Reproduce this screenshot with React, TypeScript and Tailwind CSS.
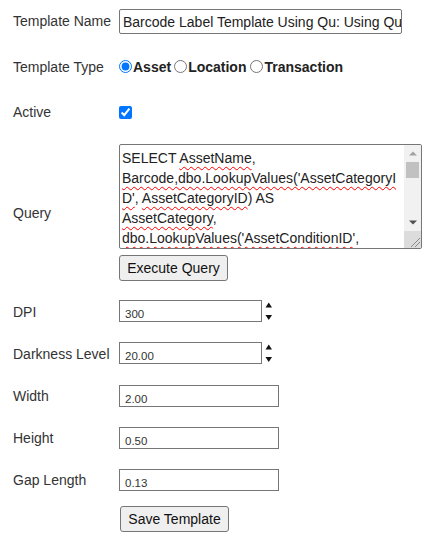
import React from "react";

const sq = "underline decoration-wavy decoration-[#ff0000] decoration-1 underline-offset-[3px]";

function Spinner() {
  return (
    <svg width="8" height="22" viewBox="0 0 8 22" className="ml-[3px] shrink-0">
      <polygon points="0.5,7.5 3.75,2.5 7,7.5" fill="#111" />
      <polygon points="0.5,15 7,15 3.75,20" fill="#111" />
    </svg>
  );
}

function Field({ value, width }: { value: string; width: string }) {
  return (
    <div
      className={`${width} h-[22px] border border-[#767676] bg-white pl-[5px] pt-[7px] text-[11.5px] leading-[13px] text-[#333] overflow-hidden whitespace-nowrap`}
    >
      {value}
    </div>
  );
}

function Label({ children, extra = "" }: { children: React.ReactNode; extra?: string }) {
  return (
    <div className={`w-[106px] shrink-0 text-[14px] leading-[20px] text-[#333] ${extra}`}>{children}</div>
  );
}

export default function App() {
  return (
    <div className="w-[435px] h-[544px] bg-white pl-[13px] font-['Liberation_Sans',Arial,sans-serif] text-[#333] flex flex-col">
      {/* Template Name */}
      <div className="mt-[9px] h-[25px] flex items-center">
        <Label extra="-mt-[2px]">Template Name</Label>
        <div className="w-[283px] h-[25px] border border-[#767676] rounded-[2px] pl-[3px] flex items-center text-[14px] leading-[20px] text-[#222] overflow-hidden whitespace-nowrap">
          Barcode Label Template Using Qu: Using Qu
        </div>
      </div>

      {/* Template Type */}
      <div className="mt-[23px] h-[20px] flex items-center">
        <Label>Template Type</Label>
        <div className="flex items-center text-[14px] leading-[20px] font-bold text-[#222]">
          <input type="radio" name="tt" defaultChecked className="m-0 w-[13px] h-[13px] -mt-[2px]" />
          <span className="ml-[1px]">Asset</span>
          <input type="radio" name="tt" className="m-0 ml-[3px] w-[13px] h-[13px] -mt-[2px]" />
          <span className="ml-[1px]">Location</span>
          <input type="radio" name="tt" className="m-0 ml-[4px] w-[13px] h-[13px] -mt-[2px]" />
          <span className="ml-[1px]">Transaction</span>
        </div>
      </div>

      {/* Active */}
      <div className="mt-[25px] h-[20px] flex items-center">
        <Label>Active</Label>
        <input type="checkbox" defaultChecked className="m-0 w-[13px] h-[13px]" />
      </div>

      {/* Query */}
      <div className="mt-[22px] flex items-center">
        <Label>Query</Label>
        <div className="flex flex-col">
          <div className="w-[303px] h-[105px] border border-[#767676] rounded-[2px] flex overflow-hidden bg-white">
            <div className="flex-1 pl-[2px] pt-[3px] text-[14px] leading-[20px] text-[#222] whitespace-nowrap overflow-hidden">
              <div>
                SELECT <span className={sq}>AssetName</span>,
              </div>
              <div>
                <span className={sq}>Barcode,dbo.LookupValues('AssetCategoryI</span>
              </div>
              <div>
                <span className={sq}>D'</span>, <span className={sq}>AssetCategoryID</span>) AS
              </div>
              <div>
                <span className={sq}>AssetCategory</span>,
              </div>
              <div>
                <span className={sq}>dbo.LookupValues('AssetConditionID'</span>,
              </div>
            </div>
            <div className="w-[17px] shrink-0 flex flex-col bg-[#f1f1f1]">
              <div className="h-[17px] flex items-center justify-center">
                <svg width="8" height="5" viewBox="0 0 8 5">
                  <polygon points="0,4.5 4,0.5 8,4.5" fill="#a3a3a3" />
                </svg>
              </div>
              <div className="h-[16px] mx-[2px] bg-[#c1c1c1]" />
              <div className="flex-1" />
              <div className="h-[17px] flex items-center justify-center">
                <svg width="8" height="5" viewBox="0 0 8 5">
                  <polygon points="0,0.5 8,0.5 4,4.5" fill="#505050" />
                </svg>
              </div>
              <div className="h-[17px] bg-[#dcdcdc] flex items-end justify-end">
                <svg width="17" height="17" viewBox="0 0 17 17">
                  <line x1="7" y1="16" x2="16" y2="7" stroke="#8a8a8a" strokeWidth="1" />
                  <line x1="11" y1="16" x2="16" y2="11" stroke="#8a8a8a" strokeWidth="1" />
                </svg>
              </div>
            </div>
          </div>
          <button className="mt-[6px] w-[109px] h-[26px] border border-[#767676] rounded-[3px] bg-[#efefef] text-[14px] leading-[20px] text-[#111] flex items-center justify-center">
            Execute Query
          </button>
        </div>
      </div>

      {/* DPI */}
      <div className="mt-[19px] h-[22px] flex items-center">
        <Label extra="pt-[2px]">DPI</Label>
        <Field value="300" width="w-[143px]" />
        <Spinner />
      </div>

      {/* Darkness */}
      <div className="mt-[20px] h-[22px] flex items-center">
        <Label extra="pt-[1px]">Darkness Level</Label>
        <Field value="20.00" width="w-[143px]" />
        <Spinner />
      </div>

      {/* Width */}
      <div className="mt-[21px] h-[22px] flex items-center">
        <Label>Width</Label>
        <Field value="2.00" width="w-[160px]" />
      </div>

      {/* Height */}
      <div className="mt-[20px] h-[22px] flex items-center">
        <Label>Height</Label>
        <Field value="0.50" width="w-[160px]" />
      </div>

      {/* Gap Length */}
      <div className="mt-[20px] h-[22px] flex items-center">
        <Label>Gap Length</Label>
        <Field value="0.13" width="w-[160px]" />
      </div>

      {/* Save */}
      <div className="mt-[15px] flex items-center">
        <div className="w-[107px] shrink-0" />
        <button className="w-[109px] h-[26px] border border-[#767676] rounded-[3px] bg-[#efefef] text-[14px] leading-[20px] text-[#111] flex items-center justify-center">
          Save Template
        </button>
      </div>
    </div>
  );
}
